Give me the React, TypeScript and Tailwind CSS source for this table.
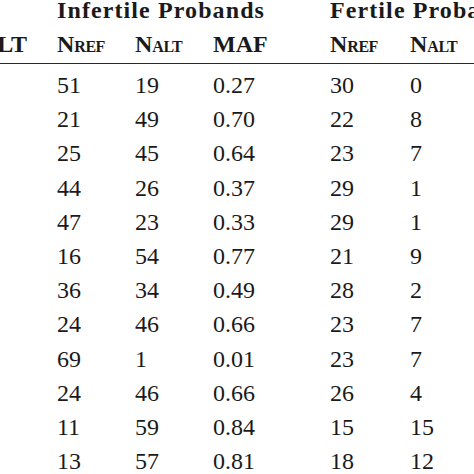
import React from "react";

const rows: [string, string, string, string, string][] = [
  ["51", "19", "0.27", "30", "0"],
  ["21", "49", "0.70", "22", "8"],
  ["25", "45", "0.64", "23", "7"],
  ["44", "26", "0.37", "29", "1"],
  ["47", "23", "0.33", "29", "1"],
  ["16", "54", "0.77", "21", "9"],
  ["36", "34", "0.49", "28", "2"],
  ["24", "46", "0.66", "23", "7"],
  ["69", "1", "0.01", "23", "7"],
  ["24", "46", "0.66", "26", "4"],
  ["11", "59", "0.84", "15", "15"],
  ["13", "57", "0.81", "18", "12"],
];

const cols = "grid grid-cols-[57px_78px_78px_117px_80px_1fr]";

function SC({ big, small }: { big: string; small: string }) {
  return (
    <span className="font-bold whitespace-nowrap">
      <span className="text-[24px]">{big}</span>
      <span className="text-[16px] tracking-[-0.5px]">{small}</span>
    </span>
  );
}

export default function App() {
  return (
    <div
      className="w-[474px] h-[474px] overflow-hidden bg-white text-[#1a1a1a]"
      style={{ fontFamily: '"Liberation Serif", "Times New Roman", serif' }}
    >
      <div className={`${cols} h-[20px] leading-[20px] text-[24px] font-bold tracking-[1.1px] whitespace-nowrap`}>
        <div />
        <div className="col-span-3">Infertile Probands</div>
        <div className="col-span-2">Fertile Probands</div>
      </div>
      <div className={`${cols} pt-[8px] leading-[32px] border-b-[1.5px] border-[#2a2a2a]`}>
        <div className="text-right pr-[30px] text-[24px] font-bold whitespace-nowrap flex justify-end">
          <span>ALT</span>
        </div>
        <div><SC big="N" small="REF" /></div>
        <div><SC big="N" small="ALT" /></div>
        <div className="text-[24px] font-bold">MAF</div>
        <div><SC big="N" small="REF" /></div>
        <div><SC big="N" small="ALT" /></div>
      </div>
      <div className="pt-[4px] text-[24px]">
        {rows.map((r, i) => (
          <div key={i} className={`${cols} h-[34.2px] leading-[34.2px]`}>
            <div />
            <div>{r[0]}</div>
            <div>{r[1]}</div>
            <div>{r[2]}</div>
            <div>{r[3]}</div>
            <div>{r[4]}</div>
          </div>
        ))}
      </div>
    </div>
  );
}
